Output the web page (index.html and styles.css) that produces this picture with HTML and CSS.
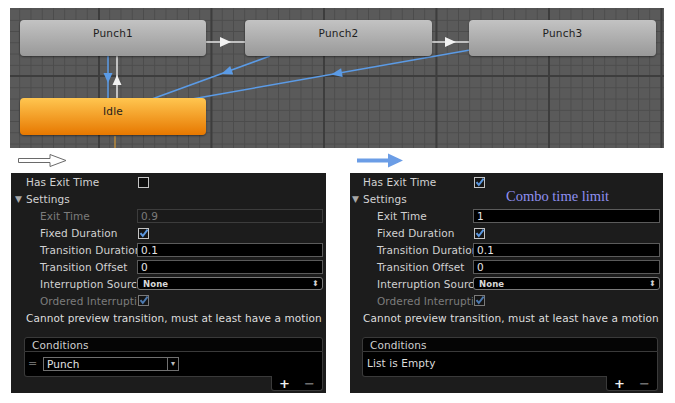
FILE: index.html
```html
<!DOCTYPE html>
<html>
<head>
<meta charset="utf-8">
<link rel="stylesheet" href="styles.css">
</head>
<body>
<div class="page">
  <div class="graph">
    <svg class="wires" width="654" height="140" viewBox="0 0 654 140">
      <line x1="196" y1="34" x2="235" y2="34" stroke="#e6e6e6" stroke-width="1.5"/>
      <polygon points="210,29 221,34 210,39" fill="#f2f2f2"/>
      <line x1="422" y1="34" x2="459" y2="34" stroke="#e6e6e6" stroke-width="1.5"/>
      <polygon points="435,29 446,34 435,39" fill="#f2f2f2"/>
      <line x1="98" y1="48" x2="98" y2="90" stroke="#5b9be6" stroke-width="1.5"/>
      <polygon points="93.5,65 102.5,65 98,75" fill="#5b9be6"/>
      <line x1="107" y1="48" x2="107" y2="90" stroke="#e6e6e6" stroke-width="1.5"/>
      <polygon points="102.5,77 111.5,77 107,67" fill="#f2f2f2"/>
      <line x1="260" y1="48" x2="142" y2="91" stroke="#5b9be6" stroke-width="1.5"/>
      <polygon points="-5,-4.5 6,0 -5,4.5" fill="#5b9be6" transform="translate(217 64) rotate(160)"/>
      <line x1="460" y1="42" x2="182" y2="91" stroke="#5b9be6" stroke-width="1.5"/>
      <polygon points="-5,-4.5 6,0 -5,4.5" fill="#5b9be6" transform="translate(327 65.5) rotate(170)"/>
      <line x1="105" y1="128" x2="105" y2="140" stroke="#b98a3c" stroke-width="1.5"/>
    </svg>
    <div class="node node-p1">Punch1</div>
    <div class="node node-p2">Punch2</div>
    <div class="node node-p3">Punch3</div>
    <div class="node node-idle">Idle</div>
  </div>

  <div class="lower">
    <div class="col col-left">
      <svg class="hint" width="50" height="15" viewBox="0 0 50 15">
        <polygon points="0.5,5.5 32,5.5 32,1.5 48,7.5 32,13.5 32,9.5 0.5,9.5" fill="#fff" stroke="#6a6a6a" stroke-width="1"/>
      </svg>
      <div class="panel panel-left">
        <div class="row"><span class="lab">Has Exit Time</span><span class="box"></span></div>
        <div class="row"><span class="lab fold"><span class="tri">▼</span>Settings</span></div>
        <div class="row sub"><span class="lab dim">Exit Time</span><span class="field off">0.9</span></div>
        <div class="row sub"><span class="lab">Fixed Duration</span><svg class="check" width="11" height="11" viewBox="0 0 11 11"><rect x="0.5" y="0.5" width="10" height="10" fill="#151515" stroke="#c4c4c4"/><path d="M2.5 5.2 L4.8 8 L9.6 1.6" fill="none" stroke="#5c98e0" stroke-width="2"/></svg></div>
        <div class="row sub"><span class="lab">Transition Duration</span><span class="field">0.1</span></div>
        <div class="row sub"><span class="lab">Transition Offset</span><span class="field">0</span></div>
        <div class="row sub"><span class="lab">Interruption Source</span><span class="field select"><span class="sel-text">None</span><span class="updown">⬍</span></span></div>
        <div class="row sub"><span class="lab dim">Ordered Interruption</span><svg class="check dimcheck" width="11" height="11" viewBox="0 0 11 11"><rect x="0.5" y="0.5" width="10" height="10" fill="#151515" stroke="#7a7a7a"/><path d="M2.5 5.2 L4.8 8 L9.6 1.6" fill="none" stroke="#4c78ad" stroke-width="2"/></svg></div>
        <div class="row"><span class="note">Cannot preview transition, must at least have a motion</span></div>
        <div class="conds">
          <div class="conds-head">Conditions</div>
          <div class="conds-body">
            <div class="cond-row"><span class="handle">=</span><span class="drop"><span class="drop-text">Punch</span><span class="drop-btn">▾</span></span></div>
          </div>
          <div class="conds-foot"><span class="plus">+</span><span class="minus">−</span></div>
        </div>
      </div>
    </div>

    <div class="col col-right">
      <svg class="hint" width="50" height="15" viewBox="0 0 50 15">
        <polygon points="0,5.5 31,5.5 31,0.5 46,7.5 31,14.5 31,9.5 0,9.5" fill="#6b9de6"/>
      </svg>
      <div class="panel panel-right">
        <div class="annot">Combo time limit</div>
        <div class="row"><span class="lab">Has Exit Time</span><svg class="check" width="11" height="11" viewBox="0 0 11 11"><rect x="0.5" y="0.5" width="10" height="10" fill="#151515" stroke="#c4c4c4"/><path d="M2.5 5.2 L4.8 8 L9.6 1.6" fill="none" stroke="#5c98e0" stroke-width="2"/></svg></div>
        <div class="row"><span class="lab fold"><span class="tri">▼</span>Settings</span></div>
        <div class="row sub"><span class="lab">Exit Time</span><span class="field">1</span></div>
        <div class="row sub"><span class="lab">Fixed Duration</span><svg class="check" width="11" height="11" viewBox="0 0 11 11"><rect x="0.5" y="0.5" width="10" height="10" fill="#151515" stroke="#c4c4c4"/><path d="M2.5 5.2 L4.8 8 L9.6 1.6" fill="none" stroke="#5c98e0" stroke-width="2"/></svg></div>
        <div class="row sub"><span class="lab">Transition Duration</span><span class="field">0.1</span></div>
        <div class="row sub"><span class="lab">Transition Offset</span><span class="field">0</span></div>
        <div class="row sub"><span class="lab">Interruption Source</span><span class="field select"><span class="sel-text">None</span><span class="updown">⬍</span></span></div>
        <div class="row sub"><span class="lab dim">Ordered Interruption</span><svg class="check dimcheck" width="11" height="11" viewBox="0 0 11 11"><rect x="0.5" y="0.5" width="10" height="10" fill="#151515" stroke="#7a7a7a"/><path d="M2.5 5.2 L4.8 8 L9.6 1.6" fill="none" stroke="#4c78ad" stroke-width="2"/></svg></div>
        <div class="row"><span class="note">Cannot preview transition, must at least have a motion</span></div>
        <div class="conds">
          <div class="conds-head">Conditions</div>
          <div class="conds-body">
            <div class="empty">List is Empty</div>
          </div>
          <div class="conds-foot"><span class="plus">+</span><span class="minus">−</span></div>
        </div>
      </div>
    </div>
  </div>
</div>
</body>
</html>
```
FILE: styles.css
```css
html, body {
  margin: 0;
  padding: 0;
  background: #ffffff;
}

.page {
  width: 675px;
  height: 403px;
  padding-top: 8px;
  box-sizing: border-box;
  font-family: "DejaVu Sans", Verdana, sans-serif;
}

/* ---------- animator graph ---------- */
.graph {
  position: relative;
  margin-left: 10px;
  width: 654px;
  height: 140px;
  overflow: hidden;
  background-color: #5a5a5a;
  background-image:
    linear-gradient(90deg, #3d3d3d 1.5px, transparent 1.5px),
    linear-gradient(0deg, #3d3d3d 1.5px, transparent 1.5px),
    linear-gradient(90deg, #4c4c4c 1px, transparent 1px),
    linear-gradient(0deg, #4c4c4c 1px, transparent 1px);
  background-size: 112.5px 112.5px, 112.5px 112.5px, 11.25px 11.25px, 11.25px 11.25px;
  background-position: 88px 69px, 88px 69px, 88px 69px, 88px 69px;
}

.wires {
  position: absolute;
  left: 0;
  top: 0;
  z-index: 1;
}

.node {
  position: absolute;
  z-index: 2;
  height: 36px;
  box-sizing: border-box;
  padding-top: 6px;
  line-height: 14px;
  text-align: center;
  font-size: 10.5px;
  letter-spacing: 0.2px;
  color: #1e1e1e;
  border-radius: 4px;
  background: linear-gradient(#c3c3c3, #999999);
  box-shadow: 0 1px 2px rgba(0, 0, 0, 0.45);
}

.node-p1 { left: 10px; top: 12px; width: 186px; }
.node-p2 { left: 235px; top: 12px; width: 187px; }
.node-p3 { left: 459px; top: 12px; width: 187px; }
.node-idle {
  left: 10px;
  top: 90px;
  width: 186px;
  height: 37px;
  background: linear-gradient(#ffc650, #e77800);
}

/* ---------- lower part ---------- */
.lower {
  display: flex;
  gap: 24px;
  padding-left: 11px;
}

.col {
  display: flex;
  flex-direction: column;
}

.hint {
  display: block;
  margin: 5px 0 5px 7px;
}

.panel {
  position: relative;
  height: 220px;
  box-sizing: border-box;
  padding-top: 1px;
  background: #1c1c1c;
  font-size: 10.5px;
  letter-spacing: 0.1px;
  color: #d2d2d2;
}

.panel-left {
  width: 315px;
  --lab: 126px;
  --ind: 15px;
  --cind: 13px;
  --cright: 3px;
}

.panel-right {
  width: 313px;
  --lab: 123px;
  --ind: 13px;
  --cind: 12px;
  --cright: 5px;
}

.row {
  display: flex;
  align-items: center;
  height: 16.9px;
}

.lab {
  flex: none;
  width: var(--lab);
  box-sizing: border-box;
  padding-left: var(--ind);
  white-space: nowrap;
  overflow: hidden;
}

.sub .lab {
  padding-left: calc(var(--ind) + 14px);
}

.lab.fold {
  padding-left: calc(var(--ind) - 11px);
}

.tri {
  display: inline-block;
  width: 11px;
  font-size: 9px;
  color: #a8a8a8;
  vertical-align: 1px;
}

.dim {
  color: #7c7c7c;
}

.field {
  flex: 1;
  margin-right: 3px;
  height: 14px;
  box-sizing: border-box;
  padding-left: 3px;
  border: 1px solid #5b5b5b;
  background: #000;
  color: #e4e4e4;
  line-height: 12px;
  white-space: nowrap;
}

.field.off {
  background: #1a1a1a;
  border-color: #3c3c3c;
  color: #7a7a7a;
}

.field.select {
  display: flex;
  align-items: center;
  justify-content: space-between;
  height: 13px;
  border: 1px solid #7a7a7a;
  border-radius: 3px;
  padding: 0 3px 0 5px;
}

.sel-text {
  font-size: 8.5px;
  font-weight: bold;
  color: #d8d8d8;
}

.updown {
  font-size: 8px;
  color: #d0d0d0;
}

.box {
  display: block;
  width: 11px;
  height: 11px;
  margin-left: 1px;
  box-sizing: border-box;
  border: 1px solid #c4c4c4;
  background: #0e0e0e;
}

.check {
  display: block;
  margin-left: 1px;
}

.note {
  padding-left: var(--ind);
  white-space: nowrap;
  color: #dedede;
}

/* conditions list */
.conds {
  margin: 11px var(--cright) 0 var(--cind);
}

.conds-head {
  height: 15px;
  box-sizing: border-box;
  padding-left: 7px;
  line-height: 14px;
  background: #050505;
  border: 1px solid #3a3a3a;
  border-radius: 3px 3px 0 0;
  color: #cfcfcf;
}

.conds-body {
  height: 25px;
  box-sizing: border-box;
  background: #000;
  border: 1px solid #3a3a3a;
  border-top: none;
  border-radius: 0 0 0 3px;
}

.cond-row {
  display: flex;
  align-items: center;
  height: 23px;
}

.handle {
  width: 18px;
  padding-left: 3px;
  box-sizing: border-box;
  color: #6c6c6c;
  font-size: 11px;
}

.drop {
  display: flex;
  align-items: center;
  width: 136px;
  height: 14px;
  box-sizing: border-box;
  border: 1px solid #707070;
  background: #000;
}

.drop-text {
  flex: 1;
  padding-left: 3px;
  color: #e4e4e4;
  line-height: 12px;
}

.drop-btn {
  width: 11px;
  height: 12px;
  box-sizing: border-box;
  border-left: 1px solid #707070;
  font-size: 8px;
  line-height: 12px;
  text-align: center;
  color: #bcbcbc;
}

.empty {
  padding-left: 4px;
  line-height: 22px;
  color: #dcdcdc;
}

.conds-foot {
  display: flex;
  align-items: center;
  justify-content: space-around;
  width: 52px;
  height: 15px;
  margin: -1px 0 0 auto;
  box-sizing: border-box;
  background: #000;
  border: 1px solid #3a3a3a;
  border-top: none;
  border-radius: 0 0 3px 3px;
  font-size: 13px;
  font-weight: bold;
  line-height: 13px;
}

.plus { color: #f0f0f0; }
.minus { color: #6f6f6f; }

.annot {
  position: absolute;
  left: 156px;
  top: 15px;
  font-family: "Liberation Serif", "Times New Roman", serif;
  font-size: 14.5px;
  letter-spacing: 0;
  color: #8f90f2;
  white-space: nowrap;
}
```
